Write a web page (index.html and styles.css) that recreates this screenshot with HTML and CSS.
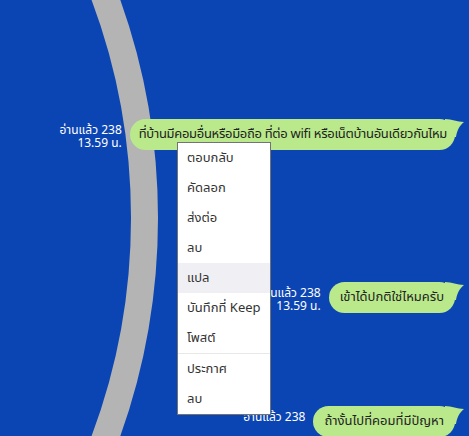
FILE: index.html
```html
<!DOCTYPE html>
<html lang="th">
  <head>
    <meta charset="UTF-8" />
    <meta name="viewport" content="width=device-width, initial-scale=1.0" />
    <title>แชท</title>
    <link rel="stylesheet" href="styles.css">
  </head>
  <body>
    <!-- background decoration: large grey ring -->
    <svg class="ring" width="469" height="436" viewBox="0 0 469 436">
      <circle cx="-491.5" cy="218" r="636" fill="none" stroke="#b4b4b4" stroke-width="27" />
    </svg>

    <div class="chat">
      <div class="row row-first">
        <div class="receipt">อ่านแล้ว 238<br />13.59 น.</div>
        <div class="bubble bubble-long">
          <svg class="tail" width="20" height="20" viewBox="0 0 20 20"><path d="M0 0 C7 0 12 3 19 3 C15 6 12 11 11 18 L0 18 Z" fill="#b9e98a" /></svg>
          <span>ที่บ้านมีคอมอื่นหรือมือถือ ที่ต่อ wifi หรือเน็ตบ้านอันเดียวกันไหม</span>
        </div>
      </div>

      <div class="row row-second">
        <div class="receipt">อ่านแล้ว 238<br />13.59 น.</div>
        <div class="bubble">
          <svg class="tail" width="20" height="20" viewBox="0 0 20 20"><path d="M0 0 C7 0 12 3 19 3 C15 6 12 11 11 18 L0 18 Z" fill="#b9e98a" /></svg>
          <span>เข้าได้ปกติใช่ไหมครับ</span>
        </div>
      </div>

      <div class="row row-third">
        <div class="receipt">อ่านแล้ว 238<br />&nbsp;</div>
        <div class="bubble">
          <svg class="tail" width="20" height="20" viewBox="0 0 20 20"><path d="M0 0 C7 0 12 3 19 3 C15 6 12 11 11 18 L0 18 Z" fill="#b9e98a" /></svg>
          <span>ถ้างั้นไปที่คอมที่มีปัญหา</span>
        </div>
      </div>
    </div>

    <!-- context menu -->
    <ul class="menu">
      <li>ตอบกลับ</li>
      <li>คัดลอก</li>
      <li>ส่งต่อ</li>
      <li>ลบ</li>
      <li class="active">แปล</li>
      <li>บันทึกที่ Keep</li>
      <li>โพสต์</li>
      <li class="divider"></li>
      <li>ประกาศ</li>
      <li>ลบ</li>
    </ul>
  </body>
</html>
```

FILE: styles.css
```css
body {
  font-family: Tahoma, "Noto Sans Thai", "Noto Sans", sans-serif;
  margin: 0;
  width: 469px;
  height: 436px;
  overflow: hidden;
  background: #0b45b3;
  position: relative;
}

.ring {
  position: absolute;
  left: 0;
  top: 0;
}

.chat {
  position: relative;
  display: flex;
  flex-direction: column;
  padding-top: 119px;
  padding-right: 14px;
}

.row {
  display: flex;
  justify-content: flex-end;
  align-items: flex-end;
  gap: 8px;
}

.row-second {
  margin-top: 132px;
}

.row-third {
  margin-top: 93px;
}

.receipt {
  font-size: 12px;
  line-height: 13px;
  color: #fff;
  text-align: right;
  white-space: nowrap;
}

.bubble {
  position: relative;
  height: 31px;
  line-height: 31px;
  padding: 0 11px;
  font-size: 13px;
  color: #222;
  background: #b9e98a;
  border-radius: 16px;
  white-space: nowrap;
}

.bubble span {
  position: relative;
}

.bubble-long {
  letter-spacing: -0.3px;
  padding: 0 8px 0 9px;
}

.tail {
  position: absolute;
  right: -10px;
  top: 0;
}

.menu {
  position: absolute;
  left: 177px;
  top: 142px;
  width: 92px;
  margin: 0;
  padding: 0;
  list-style: none;
  background: #fff;
  border: 1px solid rgba(0, 0, 0, 0.55);
}

.menu li {
  height: 30px;
  line-height: 30px;
  padding-left: 9px;
  font-size: 13px;
  color: #333;
  white-space: nowrap;
}

.menu li.active {
  background: #f0f0f4;
}

.menu li.divider {
  height: 1px;
  background: #e8e8e8;
}
```
